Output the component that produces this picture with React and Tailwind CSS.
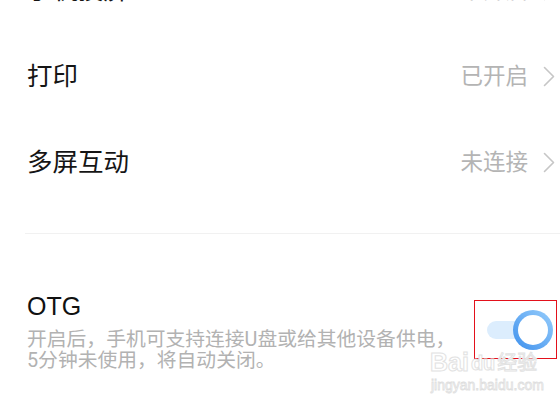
const rows = [
  { title: '手机投屏', value: '未开启' },
  { title: '打印', value: '已开启' },
  { title: '多屏互动', value: '未连接' },
];

const Chevron = () => (
  <svg width="12" height="21" viewBox="0 0 12 21" fill="none" className="shrink-0">
    <polyline points="1.5,1.5 10.5,10.5 1.5,19.5" stroke="#c6c6c6" strokeWidth="1.6" strokeLinecap="round" strokeLinejoin="round" />
  </svg>
);

const Toggle = () => (
  <div className="flex items-center">
    <div className="ml-[12px] w-[38px] h-[18px] rounded-full bg-[#dcedfd]" />
    <div className="-ml-[12px] w-[40px] h-[40px] rounded-full p-[5px] bg-linear-to-tr from-[#3d90ec] to-[#96cdfb]">
      <div className="w-full h-full rounded-full bg-white" />
    </div>
  </div>
);

export default function App() {
  return (
    <div className="relative w-[560px] h-[401px] overflow-hidden bg-white font-['Roboto','Noto_Sans_CJK_SC',sans-serif]">
      <div className="-mt-[53px]">
        {rows.map((row) => (
          <div key={row.title} className="h-[86px] flex items-center justify-between pl-[27px] pr-[5px]">
            <span className="text-[25.5px] leading-[30px] text-[#151515]">{row.title}</span>
            <div className="flex items-center gap-[15px]">
              <span className="text-[22.5px] leading-[28px] text-[#b4b4b4]">{row.value}</span>
              <Chevron />
            </div>
          </div>
        ))}
      </div>

      <div className="h-[28px]" />
      <div className="ml-[25px] h-px bg-[#f1f1f1]" />

      <div className="flex justify-between items-start pl-[27px] pr-[3px] pt-[57px]">
        <div>
          <div className="font-['Liberation_Sans',sans-serif] text-[25px] leading-[30px] text-[#111]">OTG</div>
          <div className="mt-[8px] text-[19.8px] leading-[21px] text-[#b2b2b2]">
            <p>开启后，手机可支持连接U盘或给其他设备供电，</p>
            <p>5分钟未使用，将自动关闭。</p>
          </div>
        </div>
        <div className="mt-[9px] w-[83px] h-[59px] border border-[#e3111b] flex items-center">
          <Toggle />
        </div>
      </div>

      <div className="absolute left-[430px] top-[351px] flex items-end gap-[2px] text-white [-webkit-text-stroke:1px_#e2e2e2] font-['Liberation_Sans','Noto_Sans_CJK_SC',sans-serif]">
        <span className="text-[25px] leading-[22px] font-bold">Bai</span>
        <span className="text-[20px] leading-[20px] font-bold">du</span>
        <span className="text-[20px] leading-[20px]">经验</span>
      </div>
      <div className="absolute left-[431px] top-[377px] text-[14px] leading-[16px] text-white [-webkit-text-stroke:0.8px_#dedede] font-['Liberation_Sans',sans-serif]">
        jingyan.baidu.com
      </div>
    </div>
  );
}
